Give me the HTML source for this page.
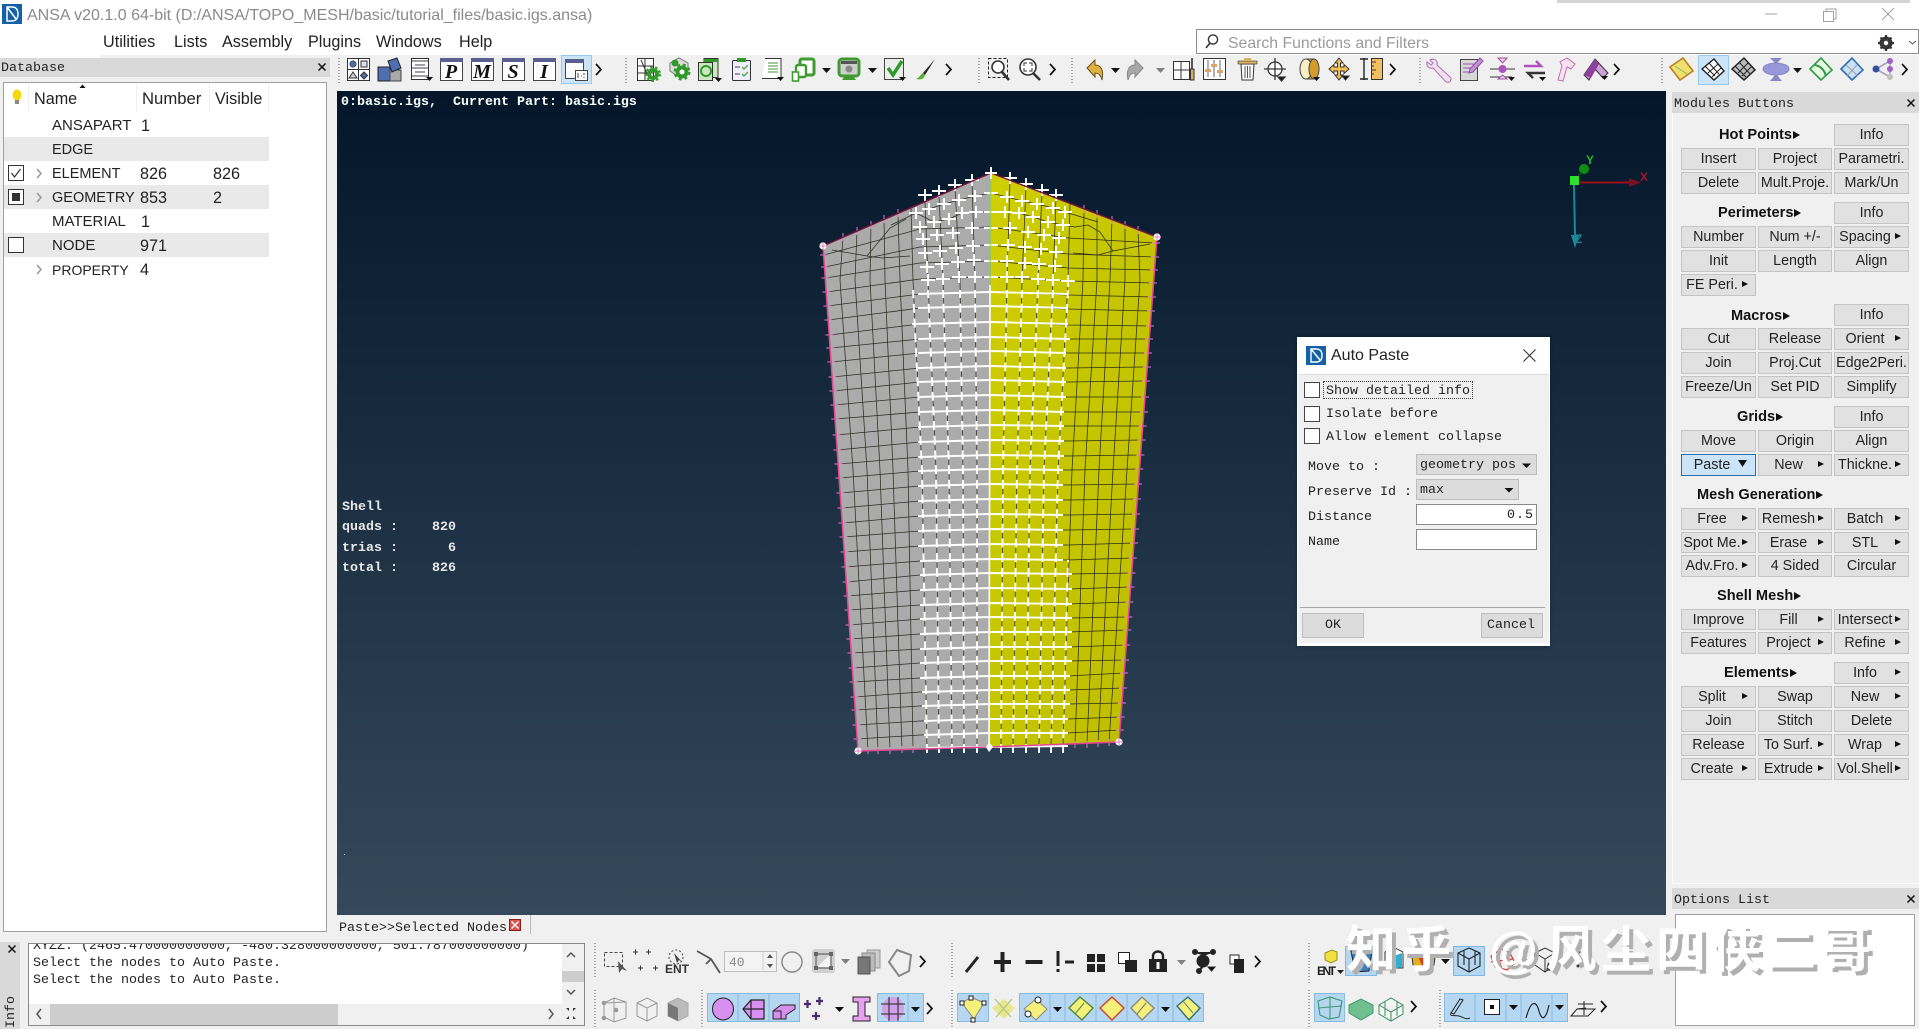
<!DOCTYPE html>
<html><head><meta charset="utf-8"><title>ANSA</title>
<style>
html,body{margin:0;padding:0;background:#fff}
#p{position:relative;width:1919px;height:1029px;overflow:hidden;background:#fff;font-family:"Liberation Sans",sans-serif;color:#222}
#p div,#p span.t{position:absolute;box-sizing:border-box}
.t{position:absolute;white-space:pre;line-height:20px;height:20px}
.m{font-family:"Liberation Mono","Noto Sans CJK SC",monospace;font-size:13.33px;color:#222}
.t.m{margin-top:2px}
.s{font-size:16.2px;color:#222}
.u{font-size:14.5px;color:#222}
.tb{background:#d9d9d9}
.b{width:75px;height:22px;background:#e1e1e1;border:1px solid #c4c4c4;font-size:14.3px;line-height:21px;text-align:center;white-space:nowrap;color:#222;overflow:visible}
.c1{left:1681px}.c2{left:1758px;width:74px}.c3{left:1834px}
.r{padding-right:13px}
.b i{position:absolute;right:7px;top:6px;width:0;height:0;border-left:6px solid #111;border-top:3.5px solid transparent;border-bottom:3.5px solid transparent}
.l{font-size:14.6px;font-weight:bold;color:#111;white-space:pre;line-height:21px;height:21px}
.l i{display:inline-block;width:0;height:0;margin-left:1px;border-left:7px solid #111;border-top:4px solid transparent;border-bottom:4px solid transparent;vertical-align:0}
.cb{left:8px;width:16px;height:16px;background:#fff;border:1px solid #333}
.dcb{left:1304px;width:16px;height:16px;background:#fff;border:1px solid #444}
.wm{font-family:"Liberation Sans","Noto Sans CJK SC",sans-serif;font-weight:bold;font-size:50px;line-height:60px;height:60px;color:#fff;text-shadow:4px 4px 0 #b0b0b0;white-space:pre;letter-spacing:5px}
</style></head><body><div id="p">

<!-- app background -->
<div style="left:0;top:55px;width:1919px;height:974px;background:#f0f0f0"></div>
<div style="left:0;top:55px;width:100px;height:3px;background:#fff"></div>

<!-- title bar -->
<span class="t" style="left:27px;top:6px;font-size:16px;color:#8a8a8a;">ANSA v20.1.0 64-bit (D:/ANSA/TOPO_MESH/basic/tutorial_files/basic.igs.ansa)</span>
<span class="t s" style="left:103px;top:32px">Utilities</span>
<span class="t s" style="left:174px;top:32px">Lists</span>
<span class="t s" style="left:222px;top:32px">Assembly</span>
<span class="t s" style="left:308px;top:32px">Plugins</span>
<span class="t s" style="left:376px;top:32px">Windows</span>
<span class="t s" style="left:459px;top:32px">Help</span>
<div style="left:1557px;top:0;width:353px;height:3px;background:#d4d4d4"></div>

<!-- search -->
<div style="left:1196px;top:29px;width:723px;height:25px;background:#fff;border:1px solid #8c8c8c"></div>
<span class="t" style="left:1228px;top:34px;font-size:15.8px;color:#9a9a9a">Search Functions and Filters</span>

<!-- database panel -->
<div class="tb" style="left:0;top:58px;width:330px;height:19px"></div>
<span class="t m" style="left:1px;top:57px">Database</span>
<div style="left:3px;top:82px;width:324px;height:850px;background:#fff;border:1px solid #a0a0a0"></div>
<div style="left:28px;top:83px;width:1px;height:29px;background:#efefef"></div>
<div style="left:136px;top:83px;width:1px;height:29px;background:#efefef"></div>
<div style="left:209px;top:83px;width:1px;height:29px;background:#efefef"></div>
<div style="left:268px;top:83px;width:1px;height:29px;background:#efefef"></div>
<span class="t s" style="left:34px;top:88.500px">Name</span>
<span class="t s" style="left:142px;top:88.500px;font-size:16.700px">Number</span>
<span class="t s" style="left:215px;top:88.500px">Visible</span>
<div style="left:4px;top:137px;width:265px;height:24px;background:#e9e9e9"></div>
<div style="left:4px;top:185px;width:265px;height:24px;background:#e9e9e9"></div>
<div style="left:4px;top:233px;width:265px;height:24px;background:#e9e9e9"></div>
<span class="t u" style="left:52px;top:116px;font-size:15px">ANSAPART</span><span class="t s" style="left:141px;top:116px">1</span>
<span class="t u" style="left:52px;top:140px">EDGE</span>
<span class="t u" style="left:52px;top:164px">ELEMENT</span><span class="t s" style="left:140px;top:164px">826</span><span class="t s" style="left:213px;top:164px">826</span>
<span class="t u" style="left:52px;top:188px">GEOMETRY</span><span class="t s" style="left:140px;top:188px">853</span><span class="t s" style="left:213px;top:188px">2</span>
<span class="t u" style="left:52px;top:212px;font-size:15px">MATERIAL</span><span class="t s" style="left:141px;top:212px">1</span>
<span class="t u" style="left:52px;top:236px;font-size:15px">NODE</span><span class="t s" style="left:140px;top:236px">971</span>
<span class="t u" style="left:52px;top:260px;font-size:14px">PROPERTY</span><span class="t s" style="left:140px;top:260px">4</span>
<div class="cb" style="top:165px"></div>
<div class="cb" style="top:189px"></div>
<div style="left:12px;top:193px;width:8px;height:8px;background:#333"></div>
<div class="cb" style="top:237px"></div>

<!-- viewport -->
<div style="left:337px;top:91px;width:1329px;height:824px;background:linear-gradient(#03162a,#35495c)"></div>
<div style="left:344px;top:854px;width:1px;height:1px;background:#cfd8df"></div>
<span class="t m" style="left:341px;top:91px;color:#fff;font-weight:bold">0:basic.igs,  Current Part: basic.igs</span>
<span class="t m" style="left:342px;top:496px;color:#e8e8e8;font-weight:bold">Shell</span>
<span class="t m" style="left:342px;top:516px;color:#e8e8e8;font-weight:bold">quads :</span><span class="t m" style="left:432px;top:516px;color:#e8e8e8;font-weight:bold">820</span>
<span class="t m" style="left:342px;top:537px;color:#e8e8e8;font-weight:bold">trias :</span><span class="t m" style="left:448px;top:537px;color:#e8e8e8;font-weight:bold">6</span>
<span class="t m" style="left:342px;top:557px;color:#e8e8e8;font-weight:bold">total :</span><span class="t m" style="left:432px;top:557px;color:#e8e8e8;font-weight:bold">826</span>

<!-- Mesh + axes -->
<svg style="position:absolute;left:0;top:0" width="1919" height="1029" viewBox="0 0 1919 1029">
<defs>
<linearGradient id="yg" x1="0" y1="0" x2="1" y2="1"><stop offset="0" stop-color="#cfcf00"/><stop offset="1" stop-color="#bcbc00"/></linearGradient>
<marker id="k" markerUnits="userSpaceOnUse" markerWidth="10" markerHeight="2" refX="5" refY="1" orient="0" overflow="visible"><path d="M1 1h8" stroke="#e27ccb" stroke-width="1"/></marker>
</defs>
<polygon points="823,246 991,173 989,747 858,751" fill="#ababab"/>
<polygon points="991,173 1157,237 1119,742 989,747" fill="url(#yg)"/>
<g fill="none" stroke="#2c2e22" stroke-width=".75" marker-start="url(#k)" marker-end="url(#k)">
<path d="M824 255L920 229 990 227 1068 238 1156 243"/>
<path d="M825 267L920 247 990 245 1068 254 1155 257"/>
<path d="M825.5 278L920 263 990 261 1068 268 1154 270"/>
<path d="M826.5 292L920 279 990 277 1068 281 1153 283"/>
<path d="M827.5 306L920 294 990 292 1068 295 1152 297"/>
<path d="M828.4 320L920 308 990 306 1068 309 1151 311"/>
<path d="M829.5 335L920 324 990 322 1068 325 1150 326"/>
<path d="M830.4 348L920 339 990 337 1068 339 1149 339"/>
<path d="M831.3 362L920 353 990 351 1068 353 1148 353"/>
<path d="M832.4 377L920 368 990 366 1068 368 1147 367"/>
<path d="M833.4 391L920 382 990 380 1068 382 1146 381"/>
<path d="M834.3 405L920 397 990 395 1068 397 1145 397"/>
<path d="M835.3 419L920 412 990 410 1068 412 1144 412"/>
<path d="M836.4 435L920 427 990 425 1068 426 1142.6 426"/>
<path d="M837.4 450L920 442 990 440 1068 441 1141.5 440"/>
<path d="M838.4 464L920 457 990 455 1068 456 1140.4 455"/>
<path d="M839.4 478L920 471 990 469 1068 470 1139.3 469"/>
<path d="M840.4 493L920 486 990 484 1068 485 1138 484"/>
<path d="M841.5 508L920 501 990 499 1068 500 1137 499"/>
<path d="M842.5 523L920 516 990 514 1068 515 1136 514"/>
<path d="M843.5 537L920 531 990 529 1068 530 1135 529"/>
<path d="M844.5 552L920 546 990 544 1068 545 1134 543"/>
<path d="M845.5 567L920 561 990 559 1068 560 1132.7 558"/>
<path d="M846.6 582L920 575 990 573 1068 574 1131.6 573"/>
<path d="M847.6 596L920 590 990 588 1068 589 1130.5 587"/>
<path d="M848.5 610L920 605 990 603 1068 604 1129.4 602"/>
<path d="M849.6 625L920 619 990 617 1068 618 1128.3 617"/>
<path d="M850.5 639L920 634 990 632 1068 632 1127.3 630"/>
<path d="M851.5 653L920 649 990 647 1068 647 1126.2 645"/>
<path d="M852.5 668L920 663 990 661 1068 661 1125 660"/>
<path d="M853.5 682L920 678 990 676 1068 676 1124 673"/>
<path d="M854.6 697L920 692 990 690 1068 690 1123 688"/>
<path d="M855.5 710L920 706 990 704 1068 704 1122 703"/>
<path d="M856.5 725L920 721 990 719 1068 719 1120.8 717"/>
<path d="M857.5 739L920 735 990 733 1068 733 1119.8 730"/>
</g>
<g fill="none" stroke="#2c2e22" stroke-width=".75">
<path d="M843 237L840 280 853 470 868 751M857 231L855 280 867 470 878 750M871 225L870 280 880 470 890 750M884 219L885 280 893 470 902 750M898 213L900 280 908 470 913 749M911 208L913 280 922 470 927 749M925 201L928 280 936 470 939 748M939 195L943 280 949 470 952 748M955 188L960 280 963 470 964 748M972 181L975 280 977 470 977 747M1010 180L1007 280 1003 470 1001 747M1026 187L1022 280 1017 470 1013 746M1042 193L1038 280 1030 470 1026 746M1056 198L1053 280 1044 470 1039 745M1070 204L1068 280 1058 470 1051 745M1084 209L1083 280 1072 470 1063 745M1097 214L1097 280 1085 470 1075 744M1112 220L1110 280 1099 470 1087 744M1125 225L1125 280 1113 470 1098 743M1138 230L1140 280 1127 470 1109 743"/>
<path d="M929 209L944 204 959 200 975 196 991 193 1007 197 1022 201 1037 204 1053 208 1065 212 1098 222M891 225L916 213 934 222 949 219 962 213 976 212 991 212 1005 212 1019 213 1033 217 1048 222 1063 225 1075 227"/>
<path d="M832 250L867 256 882 258 910 256M867 256L890 228 906 219M1073 253L1098 255 1113 251 1150 244M1075 227L1088 225 1100 232 1113 251"/>
</g>
<!-- white cross fields -->
<g fill="none" stroke="#fff" stroke-width="1.9">
<path d="M918 294L990 292 1068 294M918 308L990 306 1068 308M912 324L990 322 1068 324M918 339L990 337 1070 339M918 353L990 351 1066 353M918 368L990 366 1066 368M918 382L990 380 1066 382M918 397L990 395 1066 397M918 412L990 410 1064 412M918 427L990 425 1064 426M918 442L990 440 1064 441M918 457L990 455 1064 456M918 471L990 469 1063 470M918 486L990 484 1063 485M918 501L990 499 1063 500M918 516L990 514 1063 515M918 531L990 529 1063 530M918 546L990 544 1063 545M920 561L990 559 1063 560M920 575L990 573 1072 574M920 590L990 588 1072 589M920 605L990 603 1072 604M920 619L990 617 1072 618M920 634L990 632 1072 632M920 649L990 647 1072 647M920 663L990 661 1072 661M920 678L990 676 1070 676M922 692L990 690 1070 690M922 706L990 704 1070 704M924 721L990 719 1068 719M924 735L990 733 1068 733M926 748L990 747 1068 746"/>
<path stroke-dasharray="9 5.68" d="M927 753L922 470 913 290M939 753L936 470 928 290M952 753L949 470 943 290M964 753L963 470 960 290M977 753L977 470 975 290M1001 753L1003 470 1007 290M1013 753L1017 470 1022 290M1026 753L1030 470 1038 290M1039 753L1044 470 1053 290M1051 753L1058 470 1068 290M1063 753L1068 560"/>
<path d="M925 195m-7 0h14m-7-6v12M939 191m-7 0h14m-7-6v12M955 185m-7 0h14m-7-6v12M972 180m-7 0h14m-7-6v12M1010 178m-7 0h14m-7-6v12M1026 184m-7 0h14m-7-6v12M1042 190m-7 0h14m-7-6v12M1056 195m-7 0h14m-7-6v12M929 209m-7 0h14m-7-6v12M944 204m-7 0h14m-7-6v12M959 200m-7 0h14m-7-6v12M975 196m-7 0h14m-7-6v12M991 193m-7 0h14M1007 197m-7 0h14m-7-6v12M1022 201m-7 0h14m-7-6v12M1037 204m-7 0h14m-7-6v12M1053 208m-7 0h14m-7-6v12M1065 212m-7 0h14m-7-6v12M916 213m-7 0h14m-7-6v12M934 222m-7 0h14m-7-6v12M949 219m-7 0h14m-7-6v12M962 213m-7 0h14m-7-6v12M976 212m-7 0h14m-7-6v12M991 212m-7 0h14M1005 212m-7 0h14m-7-6v12M1019 213m-7 0h14m-7-6v12M1033 217m-7 0h14m-7-6v12M1048 222m-7 0h14m-7-6v12M1063 225m-7 0h14m-7-6v12M920 227m-7 0h14m-7-6v12M937 235m-7 0h14m-7-6v12M953 233m-7 0h14m-7-6v12M972 228m-7 0h14m-7-6v12M991 228m-7 0h14M1010 228m-7 0h14m-7-6v12M1028 232m-7 0h14m-7-6v12M1044 235m-7 0h14m-7-6v12M1059 238m-7 0h14m-7-6v12M923 239m-7 0h14m-7-6v12M940 251m-7 0h14m-7-6v12M956 248m-7 0h14m-7-6v12M973 246m-7 0h14m-7-6v12M991 245m-7 0h14M1008 245m-7 0h14m-7-6v12M1025 247m-7 0h14m-7-6v12M1041 249m-7 0h14m-7-6v12M1056 252m-7 0h14m-7-6v12M925 253m-7 0h14m-7-6v12M927 267m-7 0h14m-7-6v12M942 264m-7 0h14m-7-6v12M958 262m-7 0h14m-7-6v12M974 260m-7 0h14m-7-6v12M991 261m-7 0h14M1007 261m-7 0h14m-7-6v12M1025 263m-7 0h14m-7-6v12M1039 264m-7 0h14m-7-6v12M1055 266m-7 0h14m-7-6v12M928 280m-7 0h14m-7-6v12M943 279m-7 0h14m-7-6v12M959 277m-7 0h14m-7-6v12M975 277m-7 0h14m-7-6v12M991 277m-7 0h14M1007 277m-7 0h14m-7-6v12M1022 277m-7 0h14m-7-6v12M1038 279m-7 0h14m-7-6v12M1053 280m-7 0h14m-7-6v12M1068 281m-7 0h14m-7-6v12"/>
<path d="M990 285L989 750" stroke-width="1.6"/>
</g>
<path d="M991 174L990 285" stroke="#8fd14f" stroke-width="1.3"/>
<!-- edge -->
<path d="M843 233v8M857 227v8M871 221v8M884 215v8M898 209v8M1084 205v8M1097 210v8M1112 216v8M1125 221v8M1138 226v8M868 747v7M878 747v7M890 747v7M902 746v7M913 746v7M1075 741v7M1087 741v7M1098 740v7M1109 739v7" stroke="#e27ccb" stroke-width="1" fill="none"/>
<path d="M823 246L991 173M991 173L1157 237" stroke="#7c1238" stroke-width="1.4"/>
<polyline points="823,246 858,751 989,747 1119,742 1157,237" fill="none" stroke="#e2478f" stroke-width="1.5"/>
<polygon points="988,747 991,742 995,747 991,752" fill="#fff" transform="translate(-2 0)"/>
<g fill="#fff"><circle cx="823" cy="246" r="3.6"/><circle cx="1157" cy="237" r="3.6"/><circle cx="858" cy="751" r="3.6"/><circle cx="1119" cy="742" r="3.6"/></g>
<path d="M819 246h8M823 242v8M1153 237h8M1157 233v8M854 751h8M858 747v8M1115 742h8M1119 738v8" stroke="#e27ccb" stroke-width="1"/>
<path d="M985 173h12M991 167v12" stroke="#fff" stroke-width="2"/>
<!-- axes -->
<rect x="1570" y="176" width="9" height="9" fill="#2fe02f"/>
<circle cx="1584" cy="169" r="5" fill="#0f8f12"/>
<path d="M1578 176l4-4" stroke="#0b6a0e"/>
<path d="M1579 182.5H1630" stroke="#a01018" stroke-width="2"/>
<path d="M1629 178L1641 182.5 1629 187z" fill="#7c1020"/>
<path d="M1574 185L1575 236" stroke="#1d8797" stroke-width="2"/>
<path d="M1571 235L1575 248 1579 235z" fill="#1d8797"/>
<text x="1586" y="164" font-family="Liberation Sans,sans-serif" font-size="12" font-weight="bold" fill="#1fb52a">Y</text>
<text x="1640" y="181" font-family="Liberation Sans,sans-serif" font-size="12" font-weight="bold" fill="#a4162c">X</text>
<text x="1575" y="243" font-family="Liberation Sans,sans-serif" font-size="12" font-weight="bold" fill="#1d8797">Z</text>
</svg>

<!-- modules panel -->
<div style="left:1666px;top:91px;width:253px;height:824px;background:#f0f0f0"></div>
<div style="left:1672px;top:113px;width:247px;height:771px;border-left:1px solid #fff;border-bottom:1px solid #fff"></div>
<div class="tb" style="left:1672px;top:92px;width:247px;height:21px"></div>
<span class="t m" style="left:1674px;top:93px">Modules Buttons</span>

<div class="l" style="position:absolute;left:1719px;top:125px">Hot Points<i></i></div>
<div class="b c3" style="top:124px">Info</div>
<div class="b c1" style="top:148px">Insert</div><div class="b c2" style="top:148px">Project</div><div class="b c3" style="top:148px">Parametri.</div>
<div class="b c1" style="top:172px">Delete</div><div class="b c2" style="top:172px">Mult.Proje.</div><div class="b c3" style="top:172px">Mark/Un</div>
<div class="l" style="left:1718px;top:203px">Perimeters<i></i></div>
<div class="b c3" style="top:202px">Info</div>
<div class="b c1" style="top:226px">Number</div><div class="b c2" style="top:226px">Num +/-</div><div class="b c3 r" style="top:226px">Spacing<i></i></div>
<div class="b c1" style="top:250px">Init</div><div class="b c2" style="top:250px">Length</div><div class="b c3" style="top:250px">Align</div>
<div class="b c1 r" style="top:274px">FE Peri.<i></i></div>
<div class="l" style="left:1731px;top:306px">Macros<i></i></div>
<div class="b c3" style="top:304px">Info</div>
<div class="b c1" style="top:328px">Cut</div><div class="b c2" style="top:328px">Release</div><div class="b c3 r" style="top:328px">Orient<i></i></div>
<div class="b c1" style="top:352px">Join</div><div class="b c2" style="top:352px">Proj.Cut</div><div class="b c3" style="top:352px">Edge2Peri.</div>
<div class="b c1" style="top:376px">Freeze/Un</div><div class="b c2" style="top:376px">Set PID</div><div class="b c3" style="top:376px">Simplify</div>
<div class="l" style="left:1737px;top:407px">Grids<i></i></div>
<div class="b c3" style="top:406px">Info</div>
<div class="b c1" style="top:430px">Move</div><div class="b c2" style="top:430px">Origin</div><div class="b c3" style="top:430px">Align</div>
<div class="b c1 r" style="top:454px;background:#cce4f7;border-color:#2a6fa8">Paste<svg style="position:absolute;right:7px;top:4px" width="10" height="9"><path d="M0 1h9L4.5 8z" fill="#111"/></svg></div><div class="b c2 r" style="top:454px">New<i></i></div><div class="b c3 r" style="top:454px">Thickne.<i></i></div>
<div class="l" style="left:1697px;top:485px">Mesh Generation<i></i></div>
<div class="b c1 r" style="top:508px">Free<i></i></div><div class="b c2 r" style="top:508px">Remesh<i></i></div><div class="b c3 r" style="top:508px">Batch<i></i></div>
<div class="b c1 r" style="top:532px;height:21px">Spot Me.<i></i></div><div class="b c2 r" style="top:532px;height:21px">Erase<i></i></div><div class="b c3 r" style="top:532px;height:21px">STL<i></i></div>
<div class="b c1 r" style="top:555px">Adv.Fro.<i></i></div><div class="b c2" style="top:555px">4 Sided</div><div class="b c3" style="top:555px">Circular</div>
<div class="l" style="left:1717px;top:586px">Shell Mesh<i></i></div>
<div class="b c1" style="top:609px;height:21px">Improve</div><div class="b c2 r" style="top:609px;height:21px">Fill<i></i></div><div class="b c3 r" style="top:609px;height:21px">Intersect<i></i></div>
<div class="b c1" style="top:632px">Features</div><div class="b c2 r" style="top:632px">Project<i></i></div><div class="b c3 r" style="top:632px">Refine<i></i></div>
<div class="l" style="left:1724px;top:663px">Elements<i></i></div>
<div class="b c3 r" style="top:662px">Info<i></i></div>
<div class="b c1 r" style="top:686px">Split<i></i></div><div class="b c2" style="top:686px">Swap</div><div class="b c3 r" style="top:686px">New<i></i></div>
<div class="b c1" style="top:710px">Join</div><div class="b c2" style="top:710px">Stitch</div><div class="b c3" style="top:710px">Delete</div>
<div class="b c1" style="top:734px">Release</div><div class="b c2 r" style="top:734px">To Surf.<i></i></div><div class="b c3 r" style="top:734px">Wrap<i></i></div>
<div class="b c1 r" style="top:758px">Create<i></i></div><div class="b c2 r" style="top:758px">Extrude<i></i></div><div class="b c3 r" style="top:758px">Vol.Shell<i></i></div>

<!-- options list -->
<div class="tb" style="left:1672px;top:888px;width:247px;height:21px"></div>
<span class="t m" style="left:1674px;top:889px">Options List</span>
<div style="left:1675px;top:914px;width:240px;height:112px;background:#fff;border:1px solid #a0a0a0"></div>

<!-- Auto Paste dialog -->
<div style="left:1297px;top:337px;width:253px;height:309px;background:#fff;box-shadow:0 0 3px rgba(0,0,0,.35)"></div>
<div style="left:1298px;top:374px;width:251px;height:269px;background:#f0f0f0;border-top:1px solid #dcdcdc"></div>
<span class="t" style="left:1331px;top:346px;font-size:16px;color:#222">Auto Paste</span>
<div class="dcb" style="top:382px"></div><div class="dcb" style="top:406px"></div><div class="dcb" style="top:428px"></div>
<div style="left:1323px;top:381px;width:150px;height:18px;border:1px dotted #444"></div>
<span class="t m" style="left:1326px;top:380px">Show detailed info</span>
<span class="t m" style="left:1326px;top:403px">Isolate before</span>
<span class="t m" style="left:1326px;top:426px">Allow element collapse</span>
<span class="t m" style="left:1308px;top:456px">Move to :</span>
<span class="t m" style="left:1308px;top:481px">Preserve Id :</span>
<span class="t m" style="left:1308px;top:506px">Distance</span>
<span class="t m" style="left:1308px;top:531px">Name</span>
<div style="left:1416px;top:454px;width:121px;height:21px;background:#dcdcdc;border:1px solid #bdbdbd"></div>
<span class="t m" style="left:1420px;top:454px">geometry pos</span>
<div style="left:1416px;top:479px;width:103px;height:21px;background:#dcdcdc;border:1px solid #bdbdbd"></div>
<span class="t m" style="left:1420px;top:479px">max</span>
<div style="left:1416px;top:504px;width:121px;height:21px;background:#fff;border:1px solid #8a8a8a"></div>
<span class="t m" style="left:1507px;top:504px;letter-spacing:1px">0.5</span>
<div style="left:1416px;top:529px;width:121px;height:21px;background:#fff;border:1px solid #8a8a8a"></div>
<div style="left:1300px;top:607px;width:245px;height:1px;background:#a8a8a8"></div>
<div style="left:1302px;top:613px;width:62px;height:25px;background:#dcdcdc;border:1px solid #bdbdbd"></div>
<span class="t m" style="left:1325px;top:614px">OK</span>
<div style="left:1481px;top:613px;width:62px;height:25px;background:#dcdcdc;border:1px solid #bdbdbd"></div>
<span class="t m" style="left:1487px;top:614px">Cancel</span>

<!-- info & bottom -->
<span class="t m" style="left:339px;top:917px">Paste&gt;&gt;Selected Nodes</span>
<div style="left:530px;top:915px;width:1px;height:19px;background:#bbb"></div>
<div class="tb" style="left:0;top:942px;width:20px;height:87px"></div>
<span class="m" style="position:absolute;left:4px;top:996px;width:16px;height:32px;writing-mode:vertical-rl;transform:rotate(180deg);line-height:16px;white-space:pre">Info</span>
<div style="left:28px;top:943px;width:557px;height:83px;background:#fff;border:1px solid #8a8a8a;overflow:hidden">
<span class="t m" style="left:4px;top:-9px">XYZZ: (2465.470000000000, -480.328000000000, 501.787000000000)</span>
<span class="t m" style="left:4px;top:8px">Select the nodes to Auto Paste.</span>
<span class="t m" style="left:4px;top:25px">Select the nodes to Auto Paste.</span>
</div>
<div style="left:562px;top:944px;width:22px;height:81px;background:#f0f0f0"></div>
<div style="left:562px;top:971px;width:22px;height:11px;background:#cdcdcd"></div>
<div style="left:29px;top:1004px;width:555px;height:21px;background:#f0f0f0"></div>
<div style="left:50px;top:1004px;width:288px;height:21px;background:#cdcdcd"></div>

<!-- toolbar / icon overlay -->
<svg style="position:absolute;left:0;top:0" width="1919" height="1029" viewBox="0 0 1919 1029" font-family="Liberation Serif,serif">
<defs>
<path id="ch" d="M0 0l5 5.5-5 5.5" fill="none" stroke="#111" stroke-width="1.7"/>
<path id="da" d="M0 0h9l-4.5 5z" fill="#111"/>
<path id="dg" d="M0 0h9l-4.5 5z" fill="#808080"/>
<path id="sda" d="M0 0h7l-3.5 4z" fill="#111"/>
</defs>

<!-- app icon -->
<rect x="2" y="4" width="20" height="20" fill="#1461a8"/>
<path d="M7 7h5c5 0 6 4 6 7s-1 7-6 7H7zM7 7l9 12" fill="none" stroke="#fff" stroke-width="1.5"/>
<!-- window buttons -->
<path d="M1765 14h12" stroke="#a0a0a0"/>
<path d="M1823.5 11.5h10v10h-10zM1826 11.5v-2.5h10v10h-2.5" fill="none" stroke="#a0a0a0"/>
<path d="M1882 8l12 12M1894 8l-12 12" stroke="#a0a0a0"/>
<!-- search icon -->
<circle cx="1213" cy="39.5" r="4.6" fill="none" stroke="#333" stroke-width="1.4"/><path d="M1210 43l-4 5" stroke="#333" stroke-width="1.6"/>
<!-- gear -->
<circle cx="1886" cy="43" r="5" fill="none" stroke="#333" stroke-width="3"/><path d="M1886 35v16M1878 43h16M1880.5 37.5l11 11M1891.5 37.5l-11 11" stroke="#333" stroke-width="2.2"/><circle cx="1886" cy="43" r="2.2" fill="#fff"/>
<path d="M1909 41l3.5 3 3.5-3" fill="none" stroke="#555"/>
<!-- panel X -->
<path d="M318.5 63.5l7 7M325.5 63.5l-7 7M1907.5 99.5l7 7M1914.5 99.5l-7 7M1907.5 895.5l7 7M1914.5 895.5l-7 7M8.5 945.5l7 7M15.5 945.5l-7 7" stroke="#111" stroke-width="1.5"/>
<!-- db tree -->
<path d="M79.5 88l3-3.5 3 3.5z" fill="#111"/>
<ellipse cx="17" cy="95" rx="4.5" ry="5.5" fill="#f5d90f"/><rect x="15" y="100" width="4" height="4" fill="#888"/>
<path d="M11.5 173l3 4 6-8" fill="none" stroke="#333" stroke-width="1.2"/>
<path d="M37 169l4 4.5-4 4.5M37 193l4 4.5-4 4.5M37 265l4 4.5-4 4.5" fill="none" stroke="#999" stroke-width="1.5"/>
<!-- dialog icon & X -->
<rect x="1306" y="346" width="20" height="19" fill="#1461a8"/>
<path d="M1311 349h5c5 0 6 3 6 6.5s-1 6.5-6 6.5h-5zM1311 349l9 11" fill="none" stroke="#fff" stroke-width="1.4"/>
<path d="M1523.5 349.5l12 12M1535.5 349.5l-12 12" stroke="#333" stroke-width="1.1"/>
<path d="M1522 463.5h9l-4.5 4.5zM1504.5 488h9l-4.5 4.5z" fill="#111"/>
<!-- info scroll -->
<path d="M567 957l4-4 4 4M567 990l4 4 4-4" fill="none" stroke="#555" stroke-width="1.5"/>
<path d="M41 1009l-4 5 4 5M549 1009l4 5-4 5" fill="none" stroke="#555" stroke-width="1.5"/>
<path d="M566 1008h3v3zM576 1008h-3v3zM566 1019h3v-3zM576 1019h-3v-3z" fill="#333"/>
<rect x="509.5" y="919.5" width="11" height="11" fill="#d9534f" stroke="#8b1a1a"/><path d="M511.5 921.5l7 7M518.5 921.5l-7 7" stroke="#fff" stroke-width="1.4"/>

<!-- dotted handles -->
<g stroke="#a8a8a8" stroke-width="2" stroke-dasharray="1 2" fill="none">
<path d="M339 58v25M626 58v25M979 58v25M1072 58v25M1420 58v25M1662 58v25M595 943v35M595 990v37M702 990v37M952 943v35M952 990v37M1309 943v40M1309 990v37M1440 990v37"/>
</g>

<!-- top toolbar -->
<g transform="translate(347 58)"><rect x=".5" y=".5" width="22" height="22" fill="#fff" stroke="#333"/><path d="M11.5 0v23M0 11.5h23" stroke="#333"/><circle cx="6" cy="6" r="3.2" fill="#4a6fa5" stroke="#333" stroke-width=".6"/><rect x="14" y="3" width="6" height="6" fill="#dde" stroke="#333"/><path d="M6 14l4 6H2z" fill="#ccd" stroke="#333"/><path d="M17 14l3.5 3.5L17 21l-3.5-3.5z" fill="#4a6fa5" stroke="#333"/></g>
<g transform="translate(378 58)"><rect x="0" y="9" width="12" height="14" fill="#4f6fb5" stroke="#222"/><rect x="12" y="12" width="11" height="11" fill="#aaa" stroke="#444"/><path d="M10 3l9-3 4 10-9 4z" fill="#4f6fb5" stroke="#222"/></g>
<g transform="translate(411 58)"><rect x=".5" y=".5" width="17" height="21" fill="#fff" stroke="#333"/><path d="M1 3h16M4 7h10M1 10h16M4 14h10M1 18h16" stroke="#667" stroke-width="1.2"/><use href="#sda" x="15" y="19"/></g>
<g font-weight="bold" font-style="italic" font-size="20" text-anchor="middle" fill="#111">
<g transform="translate(440 58)"><rect x=".5" y=".5" width="22" height="22" fill="#fff" stroke="#444"/><rect width="23" height="4" fill="#5a5f90"/><text x="11" y="20">P</text></g>
<g transform="translate(471 58)"><rect x=".5" y=".5" width="22" height="22" fill="#fff" stroke="#444"/><rect width="23" height="4" fill="#5a5f90"/><text x="11" y="20">M</text></g>
<g transform="translate(502 58)"><rect x=".5" y=".5" width="22" height="22" fill="#fff" stroke="#444"/><rect width="23" height="4" fill="#5a5f90"/><text x="11" y="20">S</text></g>
<g transform="translate(533 58)"><rect x=".5" y=".5" width="22" height="22" fill="#fff" stroke="#444"/><rect width="23" height="4" fill="#5a5f90"/><text x="11" y="20">I</text></g>
</g>
<rect x="561.5" y="55.5" width="30" height="28" fill="#cce4f7" stroke="#99c9ef"/>
<g transform="translate(565 59)"><rect x=".5" y=".5" width="18" height="19" fill="#fff" stroke="#444"/><rect width="19" height="4" fill="#5a5f90"/><rect x="10.5" y="11.5" width="12" height="10" fill="#fff" stroke="#444"/><path d="M13 14v5M16 17h1M19 14v2M19 18v1" stroke="#444"/></g>
<use href="#ch" x="596" y="64"/>

<g transform="translate(637 58)"><rect x=".5" y=".5" width="16" height="22" fill="#fff" stroke="#333"/><path d="M8 0v23M0 8h17M0 15h17M4 2l8 18" stroke="#333"/><circle cx="16" cy="16" r="4" fill="none" stroke="#2f9a2a" stroke-width="4"/><circle cx="16" cy="16" r="7" fill="none" stroke="#2f9a2a" stroke-width="2" stroke-dasharray="2.500 2.500"/></g>
<g transform="translate(669 58)"><path d="M1 5l9-5 9 5v8l-9 6-9-6z" fill="#ddd" stroke="#777"/><circle cx="6" cy="5" r="3.500" fill="#2f9a2a"/><circle cx="13" cy="14" r="4.500" fill="#fff" stroke="#2f9a2a" stroke-width="4"/><circle cx="13" cy="14" r="7.500" fill="none" stroke="#2f9a2a" stroke-width="2" stroke-dasharray="3 3"/></g>
<g transform="translate(698 58)"><rect x="6" y=".5" width="14" height="19" fill="#cde8c0" stroke="#333"/><path d="M6 1h14v3H6z" fill="#2f9a2a"/><rect x=".5" y="4.5" width="14" height="18" fill="#cde8c0" stroke="#333"/><circle cx="8" cy="13" r="5" fill="none" stroke="#2f9a2a" stroke-width="2"/><use href="#sda" x="17" y="20"/></g>
<g transform="translate(732 58)"><rect x=".5" y="2.5" width="18" height="20" rx="1" fill="#eef" stroke="#333"/><rect x="5" y="0" width="9" height="4" fill="#2f9a2a"/><path d="M3 9h5M3 16h5" stroke="#444"/><path d="M10 9l2 2 4-4M10 16l2 2 4-4" fill="none" stroke="#4fae3f" stroke-width="1.4"/></g>
<g transform="translate(761 58)"><path d="M4 .5h16v20H1" fill="#fff" stroke="#333"/><path d="M7 5h10M7 8h10M7 11h10M7 14h10" stroke="#3f9a30"/><use href="#sda" x="16" y="19"/></g>
<g transform="translate(792 58)"><rect x="8" y="1" width="14" height="16" rx="2" fill="#fff" stroke="#3f9a30" stroke-width="3"/><rect x="4" y="7" width="10" height="12" rx="2" fill="#fff" stroke="#3f9a30" stroke-width="2.4"/><rect x=".5" y="14" width="6" height="9" fill="#fff" stroke="#3f9a30" stroke-width="1.6"/></g>
<use href="#da" x="822" y="68"/>
<g transform="translate(838 58)"><rect x="1" y="1" width="20" height="17" rx="3" fill="#cfcfcf" stroke="#3f9a30" stroke-width="3"/><rect x="3" y="3" width="16" height="3" fill="#555"/><circle cx="11" cy="11" r="3.5" fill="#888"/><path d="M4 22h14l-3-4H7z" fill="#3f9a30"/></g>
<use href="#da" x="868" y="68"/>
<g transform="translate(884 58)"><rect x=".5" y=".5" width="19" height="21" fill="#eee" stroke="#444"/><path d="M4 10l5 7 9-14" fill="none" stroke="#2f9a2a" stroke-width="3.5"/><use href="#sda" x="15" y="19"/></g>
<g transform="translate(915 58)"><path d="M20 1L8 15l2 2z" fill="#222"/><path d="M8 15c-2 1-3 4-7 6 5 1 8 0 9-4z" fill="#58b030"/></g>
<use href="#ch" x="946" y="64"/>

<g transform="translate(988 58)"><rect x=".5" y=".5" width="19" height="19" fill="none" stroke="#222" stroke-dasharray="3 2"/><circle cx="10" cy="9" r="6" fill="#fff" stroke="#333" stroke-width="1.6"/><path d="M14 14l7 8" stroke="#333" stroke-width="2.6"/></g>
<g transform="translate(1019 58)"><circle cx="9" cy="9" r="8" fill="#fff" stroke="#333" stroke-width="1.6"/><path d="M5 8V5h3M13 8V5h-3M5 10v3h3M13 10v3h-3" fill="none" stroke="#333"/><path d="M14 15l7 7" stroke="#333" stroke-width="2.6"/></g>
<use href="#ch" x="1050" y="64"/>

<path d="M1087 68l8-8v5c6 0 9 5 7 15-1-5-4-7-7-7v4z" fill="#e0b040" stroke="#6a5020"/>
<use href="#da" x="1111" y="68"/>
<path d="M1143 68l-8-8v5c-6 0-9 5-7 15 1-5 4-7 7-7v4z" fill="#a8a8a8" stroke="#888"/>
<use href="#dg" x="1156" y="68"/>
<g transform="translate(1173 58)"><rect x=".5" y="3.5" width="16" height="18" fill="#fff" stroke="#333"/><path d="M8 3v18M0 12h17" stroke="#333"/><path d="M19 0v11" stroke="#333" stroke-width="1.6"/><rect x="17.5" y="11" width="3.5" height="11" fill="#d9b25a" stroke="#333"/></g>
<g transform="translate(1203 58)"><rect x=".5" y=".5" width="22" height="21" fill="#fff" stroke="#333"/><path d="M5 2v17M11 2v17M17 2v17" stroke="#666"/><rect x="2" y="11" width="6" height="3" fill="#d9a56a"/><rect x="8" y="6" width="6" height="3" fill="#d9a56a"/><rect x="14" y="12" width="6" height="3" fill="#d9a56a"/></g>
<g transform="translate(1238 58)"><path d="M3 6l1 16h11l1-16z" fill="#fff" stroke="#333"/><path d="M7 8v12M9.5 8v12M12 8v12" stroke="#555"/><rect x="0" y="3" width="19" height="3" fill="#d8b060" stroke="#333" stroke-width=".6"/><rect x="6" y="0" width="7" height="3" fill="#d8b060"/></g>
<g transform="translate(1264 58)" fill="none" stroke="#333" stroke-width="1.3"><circle cx="11" cy="11" r="7" fill="#fff"/><path d="M11 0v22M0 11h22"/><use href="#sda" x="14" y="19"/></g>
<g transform="translate(1298 58)"><path d="M8 1h8v20H8z" fill="#e8bd55" stroke="#444"/><ellipse cx="8" cy="11" rx="6" ry="10" fill="#f9edc4" stroke="#444"/><ellipse cx="16" cy="11" rx="5" ry="10" fill="#d39c2c" stroke="#444"/><use href="#sda" x="15" y="19"/></g>
<g transform="translate(1328 58)" fill="#f0c050" stroke="#333"><path d="M11 0l4 5h-2.5v4H16V6.5l5 4.500-5 4.500V13h-3.500v4H15l-4 5-4-5h2.500v-4H6v2.500L1 11l5-4.500V9h3.500V5H7z"/><use href="#sda" x="14" y="18"/></g>
<g transform="translate(1360 58)"><rect x="11.500" y=".5" width="11" height="21" fill="#f0c060" stroke="#333"/><path d="M11 4h5M11 8h3M11 12h5M11 16h3" stroke="#333"/><path d="M4 0v22M0 1h8M0 21h8" stroke="#222" stroke-width="1.4"/></g>
<use href="#ch" x="1390" y="64"/>

<path d="M1430 60c4-2 8 0 7 5l14 13c0 4-2 5-5 4l-13-14c-4 1-7-2-6-6l4 3 2-2z" fill="#f0e0f0" stroke="#b070b0"/>
<g transform="translate(1460 58)"><rect x=".5" y="1.500" width="17" height="21" fill="#d8d8d8" stroke="#444"/><path d="M3 6h11M3 10h9M3 14h7" stroke="#9a4fb0"/><path d="M20 0l3 3-10 11-4 1 1-4z" fill="#c890d8" stroke="#8a4fa0"/></g>
<g transform="translate(1490 58)"><path d="M0 11h25M0 19h22" stroke="#333"/><path d="M8 0h9l-4.500 5z" fill="#f0c8f0" stroke="#a050a0"/><circle cx="12.500" cy="11" r="4" fill="#b050c0"/><path d="M8 21h9l-4.500-4z" fill="#f0c8f0" stroke="#a050a0"/><use href="#sda" x="18" y="19"/></g>
<g transform="translate(1524 58)"><path d="M0 8h17l-5-5M21 8" fill="none" stroke="#b050c0" stroke-width="2.4"/><path d="M21 15H4l5 5" fill="none" stroke="#333" stroke-width="2.4"/><use href="#sda" x="15" y="19"/></g>
<path d="M1560 62l7-4 8 6-4 5-4-2-4 14-5-1 4-14z" fill="#f8e0f0" stroke="#c070b0"/>
<g transform="translate(1584 58)"><path d="M11 1L24 15l-5 5-8-9-6 11-5-5z" fill="#d0a0d8" stroke="#333"/><path d="M0 17L11 1l4 5-8 14z" fill="#9040a0"/><use href="#sda" x="17" y="18"/></g>
<use href="#ch" x="1614" y="64"/>

<g transform="translate(1670 58)"><path d="M0 9L13 0l10 13-13 9z" fill="#f0e070" stroke="#c08020" stroke-width="1.6"/><path d="M5 8l12 8" stroke="#80c060"/></g>
<rect x="1698.500" y="55.500" width="30" height="29" fill="#cce4f7" stroke="#99c9ef"/>
<g transform="translate(1702 59)" fill="none"><path d="M0 10L12 0l10 12-10 9z" fill="#fff" stroke="#222" stroke-width="1.4"/><path d="M3 7l10 10M7 4l10 11M6 14l10-9M10 18l9-9" stroke="#222"/></g>
<g transform="translate(1732 58)"><path d="M0 11L12 0l11 12-11 10z" fill="#bbb" stroke="#222" stroke-width="1.5"/><path d="M3 8l11 11M7 4l11 12M6 15l10-10M10 18l10-10" stroke="#222"/></g>
<g transform="translate(1763 58)"><ellipse cx="13" cy="11" rx="13" ry="6" fill="#9898d8" stroke="#8888c8"/><path d="M7 0h12L13 6zM7 23h12l-6-7z" fill="#8888c8"/></g>
<use href="#da" x="1793" y="68"/>
<g transform="translate(1809 58)"><path d="M1 11L12 0l11 12-11 10z" fill="#e8f8e0" stroke="#2f9a4a" stroke-width="1.6"/><path d="M6 7c5 1 9 4 11 11" fill="none" stroke="#2f9a4a" stroke-width="2"/></g>
<g transform="translate(1840 58)"><path d="M1 11L12 0l11 12-11 10z" fill="#c8e0f8" stroke="#3070b0" stroke-width="1.6"/><path d="M6 7l12 11M17 7L7 18" stroke="#a0a0a0"/></g>
<g transform="translate(1872 58)"><path d="M4 11L18 3M4 11l14 8M18 3v16" stroke="#b0a0c0" stroke-width="1.6"/><circle cx="4" cy="11" r="3.5" fill="#3050a0"/><circle cx="18" cy="3" r="3" fill="#a060c0"/><circle cx="18" cy="11" r="3" fill="#a060c0"/><circle cx="18" cy="19" r="3" fill="#c0c0c0"/></g>
<use href="#ch" x="1902" y="64"/>

<!-- bottom row 1 -->
<g transform="translate(604 952)" fill="none" stroke="#444"><rect x=".5" y=".5" width="18" height="14" stroke-dasharray="3 2"/><path d="M14 9l1 12 3-4 5 2z" fill="#555" stroke="none"/></g>
<path d="M633 952h5M635.500 949.500v5M646 952h5M648.500 949.500v5M638 968h5M640.500 965.500v5M653 968h5M655.500 965.500v5" stroke="#333"/>
<g transform="translate(665 949)"><circle cx="11" cy="8" r="7" fill="none" stroke="#444" stroke-dasharray="2 2"/><path d="M9 4l3 10 2-3 3 2z" fill="#444"/></g>
<text x="665" y="973" font-family="Liberation Sans,sans-serif" font-size="12" font-weight="bold" fill="#333" textLength="24">ENT</text>
<path d="M697 951l14 8 9 14M711 959l-5 5" fill="none" stroke="#555" stroke-width="1.8"/>
<rect x="724.500" y="951.500" width="52" height="20" fill="#f3f3f3" stroke="#bdbdbd"/>
<text x="729" y="966" font-family="Liberation Mono,monospace" font-size="13" fill="#888">40</text>
<path d="M763 952v18" stroke="#ccc"/><path d="M767 958l3-4 3 4zM767 964l3 4 3-4z" fill="#555"/>
<circle cx="792" cy="962" r="10" fill="none" stroke="#888" stroke-width="1.4"/>
<rect x="812" y="949" width="23" height="24" rx="3" fill="#d0d0d0"/>
<path d="M831 954l-15 14h15z" fill="#f4f4f4"/><path d="M816 954h15v14h-15z" fill="none" stroke="#777" stroke-width="1.4"/>
<path d="M814 952h4v4h-4zM829 952h4v4h-4zM814 966h4v4h-4zM829 966h4v4h-4z" fill="#666"/>
<use href="#dg" x="841" y="959"/>
<g transform="translate(858 950)"><rect x="9" y="0" width="13" height="18" fill="#ccc" stroke="#999"/><rect x="4" y="3" width="13" height="18" fill="#bbb" stroke="#888"/><rect x="0" y="7" width="12" height="17" fill="#777" stroke="#555"/></g>
<path d="M889 962l8-12 14 5-2 16-10 5z" fill="none" stroke="#888" stroke-width="2"/>
<use href="#ch" x="920" y="956"/>
<path d="M966 972l12-15" stroke="#222" stroke-width="3"/>
<path d="M1002.500 952v20M994 962h17" stroke="#222" stroke-width="4"/>
<path d="M1025.500 962h17" stroke="#222" stroke-width="4"/>
<path d="M1058 951v15M1058 969v3M1065 962h9" stroke="#222" stroke-width="3"/>
<path d="M1087 954h8v8h-8zM1097 954h8v8h-8zM1087 964h8v8h-8zM1097 964h8v8h-8z" fill="#222"/>
<rect x="1118.500" y="952.500" width="11" height="11" fill="#fff" stroke="#222"/><rect x="1125" y="960" width="12" height="12" fill="#222"/>
<g transform="translate(1149 951)"><path d="M4 8V5c0-6 10-6 10 0v3" fill="none" stroke="#222" stroke-width="2.4"/><rect x="0" y="8" width="18" height="13" fill="#222"/><rect x="7.500" y="11" width="3" height="7" fill="#fff"/></g>
<use href="#dg" x="1177" y="960"/>
<g transform="translate(1192 949)" stroke="#222" fill="#222"><path d="M3 3L12 6 21 3M12 6v10l-5 7" stroke-width="1.4"/><circle cx="11" cy="12" r="6"/><circle cx="3" cy="3" r="2.500"/><circle cx="21" cy="3" r="2.500"/><circle cx="7" cy="22" r="2.500"/><use href="#sda" x="16" y="18"/></g>
<rect x="1230" y="955" width="9" height="9" fill="#fff" stroke="#222"/><rect x="1234" y="959" width="10" height="14" fill="#222"/>
<use href="#ch" x="1255" y="956"/>
<!-- bottom right row 1 -->
<path d="M1325 953l7-3 5 2v8l-6 3-6-3z" fill="#f0e040" stroke="#a09020"/>
<text x="1317" y="975" font-family="Liberation Sans,sans-serif" font-size="12" font-weight="bold" fill="#222" textLength="19">ENT</text>
<path d="M1337 970h7l-3.500 4z" fill="#222"/>
<rect x="1345.500" y="946.500" width="31" height="29" fill="#b5d7f2" stroke="#7fb8e6"/>
<path d="M1351 951l12 4 9-4-3 20-14 1z" fill="#3a80c0" stroke="#222"/>
<path d="M1385 952l10-4 8 4v16h-18z" fill="#fff" stroke="#333"/><path d="M1394 956l8-3v14l-8 2z" fill="#30b0d0"/>
<path d="M1411 950h25l-2 15-10 8-11-8z" fill="#e0b020" stroke="#333"/><path d="M1416 952h16l-8 18z" fill="#d04020"/><path d="M1428 952h7l-2 12-8 7z" fill="#30a040"/>
<use href="#da" x="1441" y="959"/>
<rect x="1453.500" y="946.500" width="31" height="29" fill="#b5d7f2" stroke="#7fb8e6"/>
<path d="M1458 953l11-5 11 5v13l-11 6-11-6zM1458 953l11 6 11-6M1469 959v13M1464 951v14M1475 951v14" fill="none" stroke="#222" stroke-width="1.1"/>
<path d="M1491 956l10-7 9 4 5 10-8 7-12-3zM1497 952l5 18M1491 962l22-3" fill="none" stroke="#d04040" stroke-width="1.2"/>
<use href="#da" x="1518" y="959"/>
<path d="M1535 953l10-5 10 5v12l-10 7-10-7zM1535 953l10 6 10-6M1545 959v13" fill="none" stroke="#333"/><path d="M1548 962l6 8-8 1z" fill="#444"/>
<use href="#da" x="1564" y="959"/>
<circle cx="1579" cy="952" r="1.500" fill="#333"/><circle cx="1585" cy="960" r="1.500" fill="#333"/><circle cx="1578" cy="966" r="1.500" fill="#333"/>

<!-- bottom row 2 -->
<g fill="none" stroke="#999"><path d="M604 1003l10-5 12 4v16l-12 4-10-5zM614 998v24M604 1003l22-1"/><circle cx="604" cy="1003" r="1.800" fill="#999"/><circle cx="616" cy="1010" r="1.800" fill="#999"/><circle cx="604" cy="1018" r="1.800" fill="#999"/></g>
<path d="M637 1003l10-5 10 5v13l-10 5-10-5zM637 1003l10 5 10-5M647 1008v13" fill="none" stroke="#999"/>
<path d="M668 1003l10-5 10 5v13l-10 5-10-5z" fill="#bbb" stroke="#aaa"/><path d="M668 1003l10 5v13l-10-5z" fill="#777"/>
<rect x="707.500" y="993.500" width="92" height="28" fill="#b5d7f2" stroke="#88bbe0"/><path d="M738 994v27M769 994v27" stroke="#88bbe0"/>
<ellipse cx="723" cy="1009" rx="10.500" ry="11" fill="#d890f0" stroke="#222"/>
<path d="M743 1009l8-9h13v19h-13zM751 1000v19M743 1009h21" fill="#d890f0" stroke="#222" stroke-width="1.2"/>
<path d="M773 1011l8-6h14v4l-9 6v4h-13zM773 1011h8v8M781 1005l-8 6" fill="#d890f0" stroke="#222"/>
<path d="M804 1004h7M807.500 1000v8M816 1001h7M819.500 997v8M812 1016h8M816 1012v8" stroke="#4a2a6a" stroke-width="2.200"/>
<use href="#da" x="835" y="1007"/>
<path d="M853 997h17v5h-5v14h5v5h-17v-5h5v-14h-5z" fill="#e8a0f0" stroke="#222"/>
<rect x="877.500" y="993.500" width="46" height="28" fill="#b5d7f2" stroke="#88bbe0"/><path d="M908 994v27" stroke="#88bbe0"/>
<ellipse cx="893" cy="1009" rx="11" ry="12" fill="#d0a0e8"/><path d="M881 1004h24M881 1014h24M889 997v24M898 997v24" stroke="#222" stroke-width="1"/>
<use href="#da" x="911" y="1007"/><use href="#ch" x="927" y="1003"/>

<rect x="957.500" y="993.500" width="31" height="28" fill="#b5d7f2" stroke="#88bbe0"/>
<path d="M962 1003l9-6 13 6-10 16z" fill="#f4f07a" stroke="#888"/>
<path d="M960 1001h4v4h-4zM969 996h4v4h-4zM982 1001h4v4h-4zM971 1018h4v4h-4z" fill="#fff" stroke="#222"/>
<path d="M992 1008l12-9 11 9-11 11z" fill="#e8e890"/><path d="M995 999l16 18M1012 999l-16 18" stroke="#b0c880" stroke-width="1.300"/>
<rect x="1019.500" y="993.500" width="184" height="28" fill="#b5d7f2" stroke="#88bbe0"/>
<path d="M1050 994v27M1065 994v27M1096 994v27M1127 994v27M1158 994v27M1173 994v27" stroke="#88bbe0"/>
<path d="M1024 1009l12-10 11 10-11 11z" fill="#f4f07a" stroke="#888"/><circle cx="1028" cy="1014" r="3" fill="#fff" stroke="#222"/><circle cx="1038" cy="1000" r="3" fill="#fff" stroke="#222"/>
<use href="#da" x="1053" y="1007"/>
<path d="M1069 1008l11-11 13 11-11 12z" fill="#f4f07a" stroke="#4f8a3f" stroke-width="1.400"/><path d="M1075 1014l9-11" stroke="#4f8a3f"/>
<path d="M1100 1008l12-11 12 11-12 12z" fill="#f4f07a" stroke="#d04030" stroke-width="1.400"/>
<path d="M1131 1008l11-11 12 11-12 12z" fill="#f4f07a" stroke="#888" stroke-width="1.400"/><path d="M1137 1014l9-11" stroke="#777"/>
<use href="#da" x="1161" y="1007"/>
<path d="M1177 1006l11-9 12 11-11 12z" fill="#f4f07a" stroke="#2f6f7f" stroke-width="1.400"/><path d="M1183 1001l10 12" stroke="#6a8a6a"/>

<rect x="1314.500" y="993.500" width="30" height="28" fill="#b5d7f2" stroke="#88bbe0"/>
<path d="M1318 1001l12-4 12 4-3 16-10 2-9-4zM1330 997v22M1318 1008l24-2" fill="none" stroke="#3f9a70" stroke-width="1.100"/>
<path d="M1349 1005l12-6 12 6v8l-12 7-12-7z" fill="#6fbf8f" stroke="#3f9a70"/>
<path d="M1379 1005l12-7 12 7v9l-12 7-12-7zM1379 1005l12 7 12-7M1391 1012v9M1385 1002v14M1397 1002v14" fill="#f0f8f0" stroke="#3f8a60"/>
<use href="#ch" x="1411" y="1001"/>
<rect x="1444.500" y="993.500" width="123" height="28" fill="#b5d7f2" stroke="#88bbe0"/>
<path d="M1475 994v27M1506 994v27M1521 994v27M1552 994v27" stroke="#88bbe0"/>
<path d="M1451 1013l9-14 3 1-9 14zM1451 1013c-2 4 4 2 8 3s7 4 11 2" fill="none" stroke="#222"/>
<rect x="1484.500" y="999.500" width="15" height="15" fill="#fff" stroke="#222"/><rect x="1490" y="1005" width="4" height="4" fill="#111"/>
<use href="#da" x="1509" y="1005"/>
<path d="M1526 1018c5-18 10-18 13-7s7 8 10-6" fill="none" stroke="#222" stroke-width="1.200"/>
<use href="#da" x="1555" y="1005"/>
<path d="M1571 1016l6-7h18l-7 7zM1577 1009l9-1M1584 1001v14M1578 1004h15" fill="none" stroke="#222"/>
<use href="#ch" x="1601" y="1001"/>
</svg>

<!-- watermark -->
<div class="wm" style="left:1346px;top:920px">知乎</div>
<div class="wm" style="left:1489px;top:920px">@</div>
<div class="wm" style="left:1546px;top:920px">风尘四侠二哥</div>

</div></body></html>
